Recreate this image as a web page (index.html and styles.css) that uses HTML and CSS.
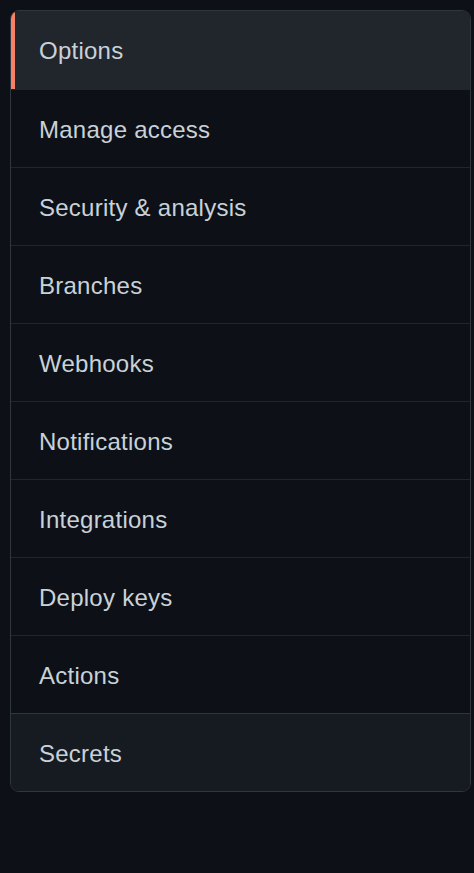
FILE: index.html
```html
<!DOCTYPE html>
<html lang="en">
<head>
  <meta charset="UTF-8">
  <meta name="viewport" content="width=device-width, initial-scale=1.0">
  <title>Settings</title>
  <link rel="stylesheet" href="styles.css">
</head>
<body>
  <nav class="menu">
    <a class="menu-item selected" href="#">Options</a>
    <a class="menu-item" href="#">Manage access</a>
    <a class="menu-item" href="#">Security &amp; analysis</a>
    <a class="menu-item" href="#">Branches</a>
    <a class="menu-item" href="#">Webhooks</a>
    <a class="menu-item" href="#">Notifications</a>
    <a class="menu-item" href="#">Integrations</a>
    <a class="menu-item" href="#">Deploy keys</a>
    <a class="menu-item" href="#">Actions</a>
    <a class="menu-item hover" href="#">Secrets</a>
  </nav>
</body>
</html>
```

FILE: styles.css
```css
html, body {
  margin: 0;
  background: #0d1117;
}
body {
  padding: 10px 3px 10px 10px;
  font-family: "Liberation Sans", Arial, sans-serif;
}
.menu {
  display: flex;
  flex-direction: column;
  border: 1px solid #30363d;
  border-radius: 9px;
  overflow: hidden;
  background: #0d1117;
}
.menu-item {
  position: relative;
  display: flex;
  align-items: center;
  box-sizing: border-box;
  height: 78px;
  padding: 2px 0 0 28px;
  border-top: 1px solid #21262d;
  color: #c9d1d9;
  font-size: 24px;
  letter-spacing: 0.25px;
  text-decoration: none;
}
.menu-item:first-child {
  border-top: none;
}
.menu-item.selected {
  background: #21262d;
}
.menu-item.selected::before {
  content: "";
  position: absolute;
  left: 0;
  top: 0;
  bottom: 0;
  width: 4px;
  background: #f78166;
}
.menu-item.hover {
  background: #161b22;
  border-top-color: #30363d;
}
```
